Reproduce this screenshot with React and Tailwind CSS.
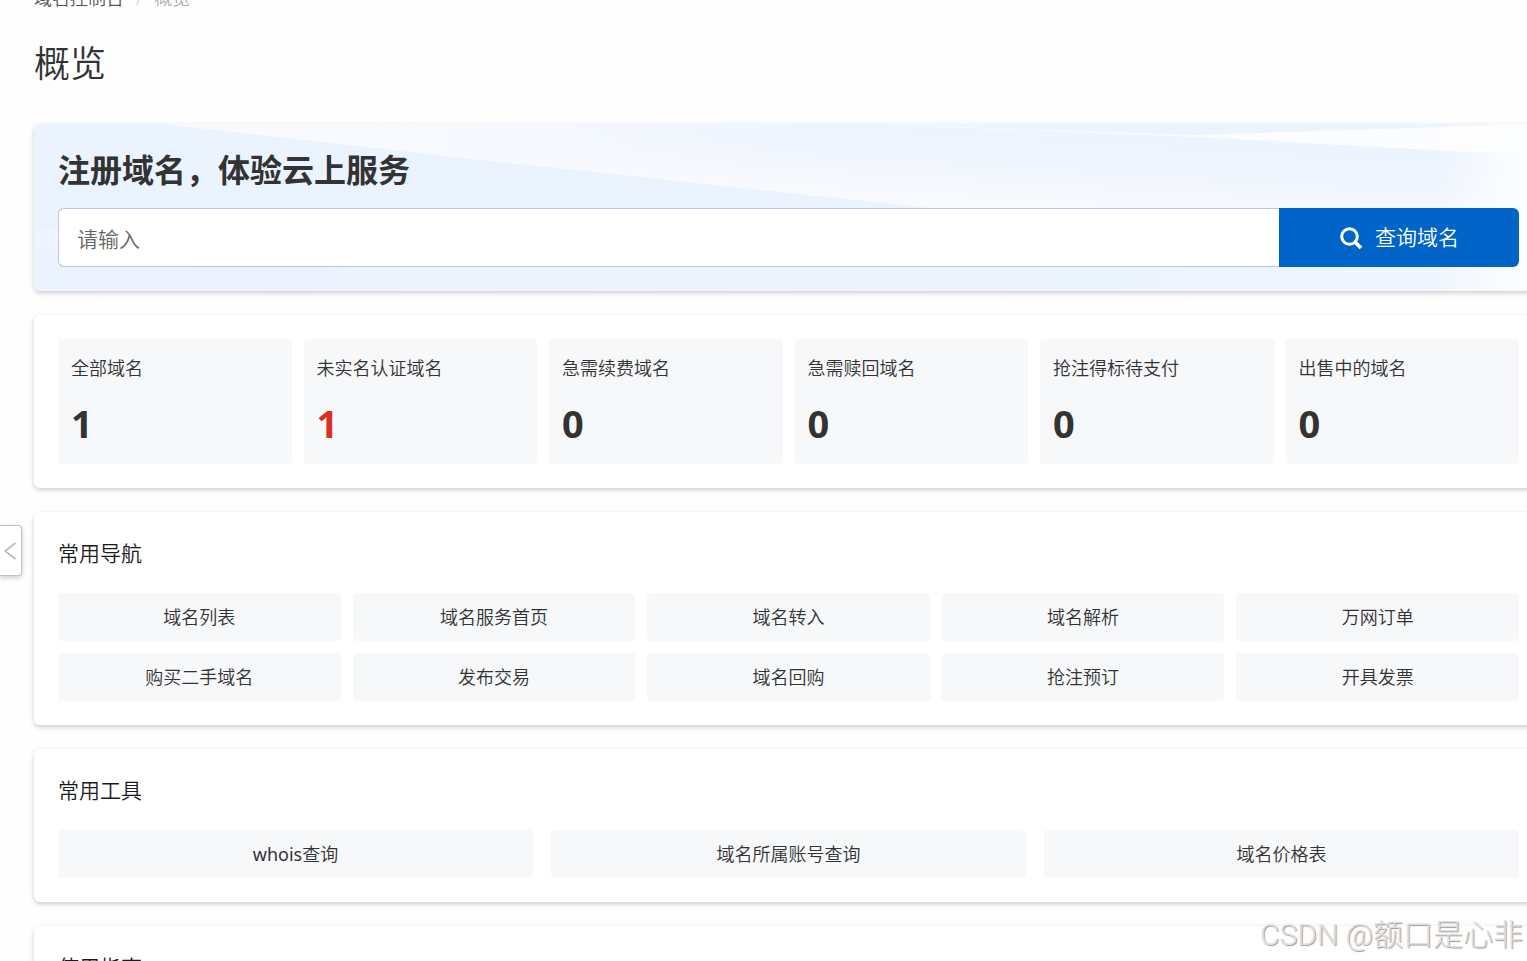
import React from "react";

const stats = [
  { label: "全部域名", value: 1 },
  { label: "未实名认证域名", value: 1, alert: true },
  { label: "急需续费域名", value: 0 },
  { label: "急需赎回域名", value: 0 },
  { label: "抢注得标待支付", value: 0 },
  { label: "出售中的域名", value: 0 },
];

const navLinks = [
  "域名列表",
  "域名服务首页",
  "域名转入",
  "域名解析",
  "万网订单",
  "购买二手域名",
  "发布交易",
  "域名回购",
  "抢注预订",
  "开具发票",
];

const Card = ({ children, className = "" }) => (
  <section
    className={`rounded-md bg-white p-6 shadow-[0_2px_5px_rgba(0,0,0,0.2)] ${className}`}
  >
    {children}
  </section>
);

const CardTitle = ({ children }) => (
  <h2 className="mb-[23px] text-[21px] leading-[34px] text-[#1a1a1a]">{children}</h2>
);

const TileLink = ({ children }) => (
  <a
    href="#"
    className="flex h-12 items-center justify-center rounded-sm bg-[#f7f8fa] text-lg text-[#333]"
  >
    {children}
  </a>
);

// Light beams behind the search form
const BannerBackground = () => (
  <svg
    className="absolute inset-0 h-full w-full"
    viewBox="0 0 1509 167"
    preserveAspectRatio="none"
    aria-hidden="true"
  >
    <defs>
      <linearGradient id="beam" x1="855" y1="-5" x2="850" y2="76" gradientUnits="userSpaceOnUse">
        <stop offset="0" stopColor="#ecf4fe" />
        <stop offset="0.45" stopColor="#f0f5fe" />
        <stop offset="1" stopColor="#f9fafe" />
      </linearGradient>
      <linearGradient id="beamLeft" x1="0" x2="1">
        <stop offset="0" stopColor="#f9faff" />
        <stop offset="0.45" stopColor="#f6faff" />
        <stop offset="1" stopColor="#f6faff" stopOpacity="0" />
      </linearGradient>
      <linearGradient id="wedge" x1="0" x2="1">
        <stop offset="0" stopColor="#f3f9fe" />
        <stop offset="0.5" stopColor="#fafcff" />
        <stop offset="1" stopColor="#fdfdff" />
      </linearGradient>
      <linearGradient id="floor" x1="0" x2="1">
        <stop offset="0" stopColor="#ebf3fe" />
        <stop offset="0.35" stopColor="#eef2fd" />
        <stop offset="0.7" stopColor="#ecf4fe" />
        <stop offset="1" stopColor="#f1f6fe" />
      </linearGradient>
      <linearGradient id="leftBand" x1="0" x2="0" y1="0" y2="1">
        <stop offset="0" stopColor="#f1f5ff" />
        <stop offset="1" stopColor="#ebf3fe" />
      </linearGradient>
      <linearGradient id="fade" x1="0" x2="1">
        <stop offset="0" stopColor="#fcfdff" stopOpacity="0" />
        <stop offset="0.8" stopColor="#fcfdff" />
        <stop offset="1" stopColor="#fcfdff" />
      </linearGradient>
    </defs>
    <rect width="1509" height="167" fill="#ebf3fe" />
    <path d="M130 0H1509V110H1100L896 84L466 38Z" fill="url(#beam)" />
    <path d="M130 0H750L700 62L466 38Z" fill="url(#beamLeft)" />
    <rect y="106" width="60" height="40" fill="url(#leftBand)" />
    <rect y="143" width="1509" height="24" fill="url(#floor)" />
    <path d="M836 0L1160 11L1509 0V32L1160 13Z" fill="url(#wedge)" />
    <rect x="1400" width="109" height="167" fill="url(#fade)" />
  </svg>
);

const SearchIcon = () => (
  <svg width="24" height="24" viewBox="0 0 24 24" fill="none" stroke="currentColor" aria-hidden="true">
    <circle cx="10.5" cy="10.5" r="7.8" strokeWidth="3" />
    <path d="M16 16L22 22" strokeWidth="3.8" />
  </svg>
);

const App = () => {
  return (
    <div className="relative h-screen overflow-hidden bg-[#fefefe] font-['Noto_Sans','Noto_Sans_CJK_SC',sans-serif] font-[350] text-[#333]">
      <main className="-mt-4 -mr-4 pl-[34px]">
        <nav className="flex h-7 items-center gap-3 text-lg text-[#555]">
          <a href="#">域名控制台</a>
          <span className="text-[#ccc]">/</span>
          <span className="text-[#aaa]">概览</span>
        </nav>

        <h1 className="mt-6 mb-8 text-4xl leading-14 font-[350]">概览</h1>

        <div className="flex flex-col gap-6">
          <Card className="relative overflow-hidden">
            <BannerBackground />
            <form className="relative" onSubmit={(e) => e.preventDefault()}>
              <label
                htmlFor="domain"
                className="mb-4 block text-[32px] leading-11 font-bold"
              >
                注册域名，体验云上服务
              </label>
              <div className="flex h-[59px]">
                <input
                  id="domain"
                  type="text"
                  placeholder="请输入"
                  className="min-w-0 flex-1 rounded-l-md border border-r-0 border-[#b9c8dc] bg-white px-[18px] pt-1 text-[21px] placeholder:text-[#666]"
                />
                <button
                  type="submit"
                  className="flex w-60 items-center justify-center gap-3 rounded-r-md bg-[#0064c8] text-[21px] text-white"
                >
                  <SearchIcon />
                  查询域名
                </button>
              </div>
            </form>
          </Card>

          <Card>
            <div className="grid grid-cols-6 gap-3">
              {stats.map((item) => (
                <div
                  key={item.label}
                  className="h-[125px] rounded-sm bg-[#f7f8fa] px-[13px] pt-4"
                >
                  <div className="text-lg leading-[26px]">{item.label}</div>
                  <div
                    className={`mt-4 text-[38px] leading-[52px] font-bold ${
                      item.alert ? "text-[#d93026]" : ""
                    }`}
                  >
                    {item.value}
                  </div>
                </div>
              ))}
            </div>
          </Card>

          <Card>
            <CardTitle>常用导航</CardTitle>
            <div className="grid grid-cols-5 gap-3">
              {navLinks.map((name) => (
                <TileLink key={name}>{name}</TileLink>
              ))}
            </div>
          </Card>

          <Card>
            <CardTitle>常用工具</CardTitle>
            <div className="grid grid-cols-3 gap-[18px]">
              <TileLink>
                <span className="font-normal">whois</span>查询
              </TileLink>
              <TileLink>域名所属账号查询</TileLink>
              <TileLink>域名价格表</TileLink>
            </div>
          </Card>

          <Card>
            <CardTitle>使用指南</CardTitle>
          </Card>
        </div>
      </main>

      <button
        type="button"
        aria-label="收起"
        className="absolute top-[525px] left-0 flex h-[51px] w-[22px] items-center justify-center rounded-r-sm border border-l-0 border-[#c0c0c8] bg-white pr-0.5 text-[#bbb] shadow-[0_2px_5px_rgba(0,0,0,0.2)]"
      >
        <svg width="12" height="18" viewBox="0 0 12 18" fill="none" stroke="currentColor" strokeWidth="1.6">
          <path d="M11.5 1L1 9L11.5 17" />
        </svg>
      </button>

      <div className="absolute right-1 bottom-1 font-['Roboto','Noto_Sans_CJK_SC',sans-serif] text-[30px] leading-11 font-light text-[#e0e0e0] [text-shadow:1px_1px_1px_#999]">
        CSDN @额口是心非
      </div>
    </div>
  );
};

export default App;
